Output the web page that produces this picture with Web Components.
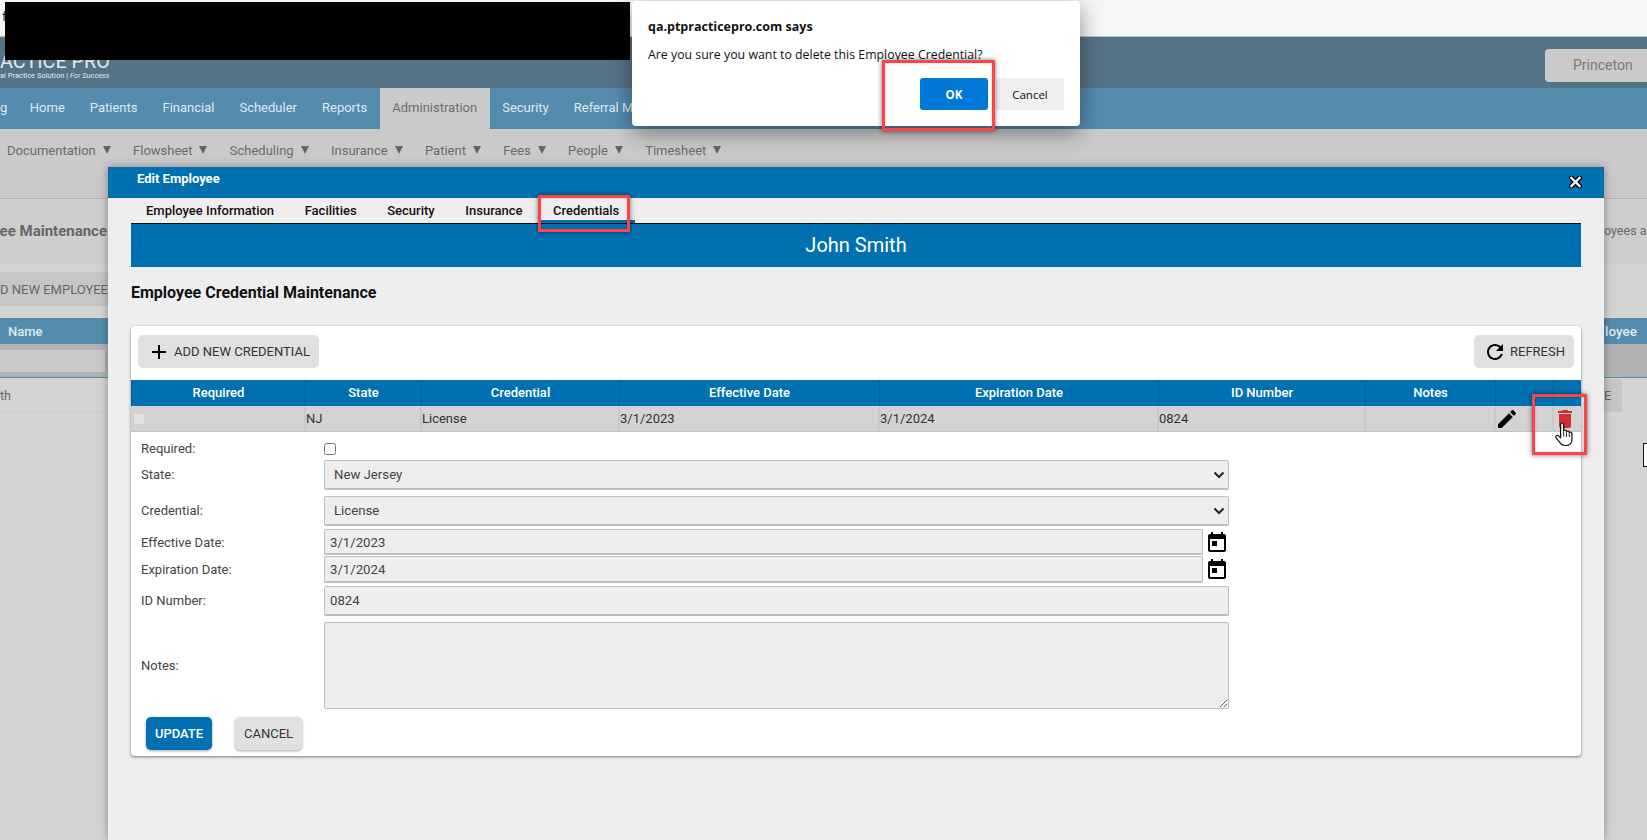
<!DOCTYPE html>
<html>
<head>
<meta charset="utf-8">
<title>Edit Employee</title>
<style>
  html, body { margin: 0; height: 100%; overflow: hidden; background: #d4d4d4; }
  body { font-family: Roboto, "Liberation Sans", sans-serif; }
</style>
</head>
<body>
<pt-app></pt-app>
<script>
function tpl(html) {
  var t = document.createElement("template");
  t.innerHTML = html;
  return t;
}

class PtElement extends HTMLElement {
  constructor() {
    super();
    this.attachShadow({ mode: "open" }).appendChild(this.constructor.template.content.cloneNode(true));
  }
}

function define(name, html) {
  customElements.define(name, class extends PtElement {
    static template = tpl(html);
  });
}

// material icons, all on the 24 box
var ICONS = {
  add: "M19 13h-6v6h-2v-6H5v-2h6V5h2v6h6v2z",
  refresh: "M17.65 6.35C16.2 4.9 14.21 4 12 4c-4.42 0-7.99 3.58-7.99 8s3.57 8 7.99 8c3.73 0 6.84-2.55 7.73-6h-2.08c-.82 2.33-3.04 4-5.65 4-3.31 0-6-2.69-6-6s2.69-6 6-6c1.66 0 3.14.69 4.22 1.78L13 11h7V4l-2.35 2.35z",
  edit: "M3 17.25V21h3.75L17.81 9.94l-3.75-3.75L3 17.25zM20.71 7.04c.39-.39.39-1.02 0-1.41l-2.34-2.34c-.39-.39-1.02-.39-1.41 0l-1.83 1.83 3.75 3.75 1.83-1.83z",
  trash: "M6 19c0 1.1.9 2 2 2h8c1.1 0 2-.9 2-2V7H6v12zM19 4h-3.5l-1-1h-5l-1 1H5v2h14V4z",
  today: "M19 3h-1V1h-2v2H8V1H6v2H5c-1.11 0-1.99.9-1.99 2L3 19c0 1.1.89 2 2 2h14c1.1 0 2-.9 2-2V5c0-1.1-.9-2-2-2zm0 16H5V8h14v11zM7 10h5v5H7z"
};

class PtIcon extends HTMLElement {
  constructor() {
    super();
    this.attachShadow({ mode: "open" }).innerHTML =
      '<style>:host{display:block;width:24px;height:24px;flex:none;color:#000}svg{display:block;fill:currentColor}</style>' +
      '<svg width="24" height="24" viewBox="0 0 24 24"><path d="' + ICONS[this.getAttribute("name")] + '"/></svg>';
  }
}
customElements.define("pt-icon", PtIcon);

// red annotation rectangles drawn over the screenshot
define("pt-mark", `
<style>
  :host { position: absolute; box-sizing: border-box; border: 3px solid #f7454a; box-shadow: 0 0 5px rgba(0,0,0,.55), inset 0 0 3px rgba(0,0,0,.2); z-index: 30; pointer-events: none; }
</style>`);

define("pt-hand", `
<style>
  :host { position: absolute; left: 1554px; top: 422px; width: 22px; height: 25px; z-index: 31; }
  svg { display: block; }
</style>
<svg width="22" height="25" viewBox="0 0 20 25" preserveAspectRatio="none">
  <path d="M6 2.4c0-1.9 2.8-1.9 2.8 0v6.7c.2-1.5 2.5-1.4 2.6.1v.7c.3-1.3 2.4-1.2 2.5.2v.8c.4-1.1 2.3-.9 2.4.5v6.4c0 3.1-2 5.7-5.3 5.7H10c-2.2 0-3.5-1.100-4.700-3L1.800 15.600c-1-1.700 1.200-3 2.400-1.700L6 15.800z" fill="#fff" stroke="#111" stroke-width="1.150" stroke-linejoin="round"/>
  <path d="M8.800 9.500v5M11.400 10.500v4.500M13.900 11.500v3.500" fill="none" stroke="#111" stroke-width=".9"/>
</svg>`);

define("pt-dialog", `
<style>
  :host { position: absolute; left: 632px; top: 1px; width: 448px; height: 125px; box-sizing: border-box; padding: 17px 16px 0; background: #fff; border-radius: 4px; box-shadow: 0 6px 22px rgba(0,0,0,.42); z-index: 20; font-family: "Open Sans", "Liberation Sans", sans-serif; color: #111; }
  .title { font-size: 12.500px; font-weight: 700; line-height: 18px; }
  .msg { font-size: 12.350px; line-height: 18px; margin-top: 10px; }
  .btns { display: flex; justify-content: flex-end; gap: 7px; margin-top: 14px; }
  .btn { width: 68px; height: 32px; border-radius: 3px; display: flex; align-items: center; justify-content: center; font-size: 11.500px; background: #efefef; }
  .ok { background: #0078d7; color: #fff; font-weight: 700; margin-right: 1px; }
</style>
<div class="title">qa.ptpracticepro.com says</div>
<div class="msg">Are you sure you want to delete this Employee Credential?</div>
<div class="btns"><div class="btn ok">OK</div><div class="btn">Cancel</div></div>`);

define("pt-topbar", `
<style>
  :host { display: block; height: 36px; background: #f6f6f6; border-bottom: 1px solid #bdbdbd; font-size: 13px; color: #333; }
  span { display: inline-block; padding: 9px 0 0 2px; }
</style>
<span>f</span>`);

define("pt-header", `
<style>
  :host { display: flex; justify-content: space-between; height: 51px; background: #557386; overflow: hidden; color: #e2e8ec; }
  .logo { display: flex; flex-direction: column; align-items: flex-start; width: 111px; }
  .name { font-size: 19.800px; line-height: 18px; margin-top: 16px; white-space: nowrap; }
  .tag { font-size: 7.500px; line-height: 9px; white-space: nowrap; }
  .branch { box-sizing: border-box; width: 102px; height: 33px; margin-top: 12px; padding: 0 0 2px 28px; display: flex; align-items: center; background: #cacaca; border-radius: 4px 0 0 4px; color: #7a7a7a; font-size: 14px; }
</style>
<div class="logo"><div class="name">ACTICE PRO</div><div class="tag">al Practice Solution | <i>For Success</i></div></div>
<div class="branch">Princeton</div>`);

define("pt-nav", `
<style>
  :host { display: flex; height: 41px; background: #558cae; color: #dfe9ef; font-size: 13px; white-space: nowrap; }
  div { display: flex; align-items: center; padding: 0 12.500px 2px; }
  .cut { padding: 0 10px 2px 0; }
  .on { background: #cacaca; color: #6f6f6f; }
</style>
<div class="cut">g</div><div>Home</div><div>Patients</div><div>Financial</div><div>Scheduler</div><div>Reports</div><div class="on">Administration</div><div>Security</div><div>Referral M</div>`);

define("pt-subnav", `
<style>
  :host { display: flex; gap: 22.300px; box-sizing: border-box; height: 70px; padding: 13px 0 0 7px; background: #cacaca; border-bottom: 1px solid #b4b4b4; color: #6a6a6a; font-size: 13px; white-space: nowrap; }
  span { display: flex; align-items: center; height: 16px; }
  span::after { content: ""; width: 0; height: 0; margin-left: 7px; border-left: 4.500px solid transparent; border-right: 4.500px solid transparent; border-top: 8px solid #666; }
</style>
<span>Documentation</span><span>Flowsheet</span><span>Scheduling</span><span>Insurance</span><span>Patient</span><span>Fees</span><span>People</span><span>Timesheet</span>`);

// what shows of the employee list left of the dialog
define("pt-list-left", `
<style>
  :host { display: block; width: 108px; overflow: hidden; color: #666; white-space: nowrap; }
  .title { display: flex; align-items: center; height: 65px; padding-bottom: 2px; box-sizing: border-box; background: #cecece; justify-content: flex-end; font-size: 15px; font-weight: 700; padding-right: 1px; }
  .add { display: flex; align-items: center; justify-content: flex-end; height: 34px; margin-top: 8px; background: #c6c6c6; font-size: 13px; }
  .head { display: flex; align-items: center; height: 26px; margin-top: 12px; padding-left: 8px; background: #558cae; color: #dfe9ef; font-size: 13px; font-weight: 500; }
  .filter { background: #b2b2b2; border-bottom: 1px solid #558cae; padding: 6px 3px 5px 0; height: 22px; }
  .filter i { display: block; height: 22px; background: #cacaca; }
  .row { height: 34px; display: flex; align-items: center; border-bottom: 1px solid #cacaca; font-size: 12.500px; }
</style>
<div class="title">ee Maintenance</div>
<div class="add">D NEW EMPLOYEE</div>
<div class="head">Name</div>
<div class="filter"><i></i></div>
<div class="row">th</div>`);

define("pt-list-right", `
<style>
  :host { display: block; position: relative; width: 43px; overflow: hidden; color: #666; white-space: nowrap; }
  .title { display: flex; align-items: center; height: 65px; background: #cecece; font-size: 12.500px; padding-bottom: 2px; box-sizing: border-box; }
  .head { display: flex; align-items: center; height: 26px; margin-top: 54px; background: #558cae; color: #dfe9ef; font-size: 13.500px; font-weight: 500; justify-content: flex-end; padding-right: 10px; }
  .filter { height: 33px; background: #b2b2b2; border-bottom: 1px solid #558cae; }
  .btn { display: flex; align-items: center; width: 18px; height: 33px; margin-top: 1px; background: #c6c6c6; border-radius: 0 4px 4px 0; font-size: 13px; }
  .box { width: 10px; height: 22px; margin: 31px 0 0 39px; background: #fff; border: 1px solid #111; }
</style>
<div class="title">oyees a</div>
<div class="head">loyee</div>
<div class="filter"></div>
<div class="btn">E</div>
<div class="box"></div>`);

define("pt-page", `
<style>
  :host { display: flex; justify-content: space-between; }
</style>
<pt-list-left></pt-list-left><pt-list-right></pt-list-right>`);

define("pt-tabs", `
<style>
  :host { display: flex; height: 25px; margin-left: -.3px; color: #111; font-size: 13px; font-weight: 500; white-space: nowrap; }
  div { box-sizing: border-box; display: flex; align-items: center; padding: 0 15.300px; }
  .on { border-bottom: 3px solid #0071b0; padding-top: 2px; }
</style>
<div>Employee Information</div><div>Facilities</div><div>Security</div><div>Insurance</div><div class="on">Credentials</div>`);

define("pt-btn", `
<style>
  :host { display: inline-flex; align-items: center; box-sizing: border-box; height: 33px; background: #e0e0e0; border-radius: 5px; color: #333; font-size: 13px; white-space: nowrap; }
  :host([primary]) { background: #0071b0; color: #fff; font-weight: 500; }
  :host([raised]) { box-shadow: 0 1px 3px rgba(0,0,0,.35); justify-content: center; }
</style>
<slot></slot>`);

define("pt-cred-table", `
<style>
  :host { display: grid; grid-template-columns: 174px 116px 198px 260px 279px 207px 130px 58px 28px; font-size: 13px; }
  .h { box-sizing: border-box; height: 26px; padding-bottom: 1px; display: flex; align-items: center; justify-content: center; background: #0071b0; color: #fff; font-size: 13px; font-weight: 500; border-left: 1px solid #00629a; }
  .h:first-child { border-left: 0; }
  .c { box-sizing: border-box; height: 26px; display: flex; align-items: center; background: #d3d3d3; color: #333; border-left: 2px solid #c9c9c9; border-bottom: 1px solid #c4c4c4; margin-left: -1px; }
  .c.first { border-left: 0; margin-left: 0; padding-left: 2px; }
  .c i { display: block; width: 10px; height: 10px; border-radius: 2px; background: #e2e2e2; border: 1px solid #d0d0d0; }
  .c.ic { align-items: flex-start; padding-top: 1px; }
  .c pt-icon { margin-left: -1px; }
  .c pt-icon[name=trash] { color: #d32f2f; }
</style>
<div class="h">Required</div><div class="h">State</div><div class="h">Credential</div><div class="h">Effective Date</div><div class="h">Expiration Date</div><div class="h">ID Number</div><div class="h">Notes</div><div class="h"></div><div class="h"></div>
<div class="c first"><i></i></div><div class="c">NJ</div><div class="c">License</div><div class="c">3/1/2023</div><div class="c">3/1/2024</div><div class="c">0824</div><div class="c"></div>
<div class="c ic"><pt-icon name="edit"></pt-icon></div><div class="c ic"><pt-icon name="trash"></pt-icon></div>`);

define("pt-field", `
<style>
  :host { display: grid; grid-template-columns: 183px 905px; align-items: center; padding-left: 10px; color: #444; font-size: 13px; }
</style>
<div><slot name="label"></slot></div><div><slot></slot></div>`);

define("pt-input", `
<style>
  :host { display: flex; align-items: center; box-sizing: border-box; width: 100%; background: #eee; border: 1px solid #bdbdbd; border-width: 1px 1px 2px 1px; border-radius: 2px; padding-left: 5px; color: #444; font-size: 13.200px; }
  :host([sel]) { padding-left: 9px; justify-content: space-between; padding-right: 3px; }
  svg { display: block; }
</style>
<slot></slot>`);

define("pt-date", `
<style>
  :host { display: flex; align-items: center; height: 100%; }
  pt-input { width: 879px; height: 100%; padding-top: 1px; }
  pt-icon { margin: 1px 0 0 2px; }
</style>
<pt-input><slot></slot></pt-input><pt-icon name="today"></pt-icon>`);

define("pt-cred-form", `
<style>
  :host { display: block; }
  textarea { display: block; box-sizing: border-box; width: 100%; height: 87px; margin: 0; background: #eee; border: 1px solid #bdbdbd; border-radius: 2px; }
  input { display: block; width: 12px; height: 12px; margin: 0; background: #fff; }
  .chev { flex: none; }
  .actions { display: flex; gap: 23px; margin: 8px 0 0 15px; }
  .r1 { margin-top: 9px; height: 12px; }
  .r2 { margin-top: 7px; }
  .h30 pt-input { height: 30px; }
  .h30 span { display: block; margin-bottom: 2px; }
  pt-date { height: 27px; }
</style>
<pt-field class="r1"><span slot="label">Required:</span><input type="checkbox"></pt-field>
<pt-field class="r2 h30"><span slot="label">State:</span><pt-input sel>New Jersey<svg class="chev" width="12" height="12" viewBox="0 0 12 12"><path d="M1.500 3.500 6 8l4.500-4.500" fill="none" stroke="#222" stroke-width="2"/></svg></pt-input></pt-field>
<pt-field class="h30" style="margin-top:6px"><span slot="label">Credential:</span><pt-input sel>License<svg class="chev" width="12" height="12" viewBox="0 0 12 12"><path d="M1.500 3.500 6 8l4.500-4.500" fill="none" stroke="#222" stroke-width="2"/></svg></pt-input></pt-field>
<pt-field style="margin-top:3px"><span slot="label">Effective Date:</span><pt-date style="height:26px">3/1/2023</pt-date></pt-field>
<pt-field style="margin-top:1px"><span slot="label">Expiration Date:</span><pt-date>3/1/2024</pt-date></pt-field>
<pt-field class="h30" style="margin-top:3px"><span slot="label">ID Number:</span><pt-input>0824</pt-input></pt-field>
<pt-field style="margin-top:6px"><span slot="label">Notes:</span><textarea></textarea></pt-field>
<div class="actions">
  <pt-btn primary raised style="width:66px">UPDATE</pt-btn>
  <pt-btn raised style="width:67px">CANCEL</pt-btn>
</div>`);

define("pt-cred-card", `
<style>
  :host { display: block; height: 430px; background: #fff; border-radius: 4px; box-shadow: 0 1px 3px rgba(0,0,0,.5); }
  .bar { display: flex; justify-content: space-between; padding: 9px 7px 12px; }
  .add { width: 181px; padding-left: 9px; }
  .add span { margin-left: 3px; }
  .ref { width: 100px; padding-left: 9px; }
  .ref span { margin-left: 3px; }
</style>
<div class="bar">
  <pt-btn class="add"><pt-icon name="add"></pt-icon><span>ADD NEW CREDENTIAL</span></pt-btn>
  <pt-btn class="ref"><pt-icon name="refresh"></pt-icon><span>REFRESH</span></pt-btn>
</div>
<pt-cred-table></pt-cred-table>
<pt-cred-form></pt-cred-form>`);

define("pt-modal", `
<style>
  :host { position: absolute; left: 108px; top: 167px; width: 1496px; height: 673px; background: #eee; box-shadow: 0 0 9px rgba(0,0,0,.35); z-index: 10; }
  .title { box-sizing: border-box; display: flex; justify-content: space-between; height: 31px; padding: 4px 22px 0 29px; background: #0071b0; color: #fff; font-size: 13px; font-weight: 700; line-height: 16px; }
  .close { margin-top: 5px; }
  .body { padding: 0 23px; }
  .banner { border-top: 1px solid #111; box-sizing: border-box; height: 44px; padding-bottom: 2px; display: flex; align-items: center; justify-content: center; background: #0071b0; color: #fff; font-size: 20px; font-weight: 400; }
  h2 { margin: 17px 0 0; height: 42px; font-size: 16px; line-height: 18px; font-weight: 700; color: #111; }
</style>
<div class="title">
  <span>Edit Employee</span>
  <svg class="close" width="13" height="12" viewBox="0 0 13 12"><path d="M2.500 2l8 8M10.500 2l-8 8" stroke="#000" stroke-width="5" stroke-linecap="square"/><path d="M2.500 2l8 8M10.500 2l-8 8" stroke="#fff" stroke-width="2.400" stroke-linecap="square"/></svg>
</div>
<div class="body">
  <pt-tabs></pt-tabs>
  <div class="banner">John Smith</div>
  <h2>Employee Credential Maintenance</h2>
  <pt-cred-card></pt-cred-card>
</div>`);

define("pt-app", `
<style>
  :host { display: block; position: relative; width: 1647px; height: 840px; overflow: hidden; }
  .redact { position: absolute; left: 5px; top: 2px; width: 625px; height: 58px; background: #000; z-index: 15; }
</style>
<pt-topbar></pt-topbar>
<pt-header></pt-header>
<pt-nav></pt-nav>
<pt-subnav></pt-subnav>
<pt-page></pt-page>
<div class="redact"></div>
<pt-modal></pt-modal>
<pt-dialog></pt-dialog>
<pt-mark style="left:538px;top:195px;width:92px;height:37px"></pt-mark>
<pt-mark style="left:882px;top:60px;width:113px;height:71px"></pt-mark>
<pt-mark style="left:1532px;top:394px;width:55px;height:61px"></pt-mark>
<pt-hand></pt-hand>`);
</script>
</body>
</html>
